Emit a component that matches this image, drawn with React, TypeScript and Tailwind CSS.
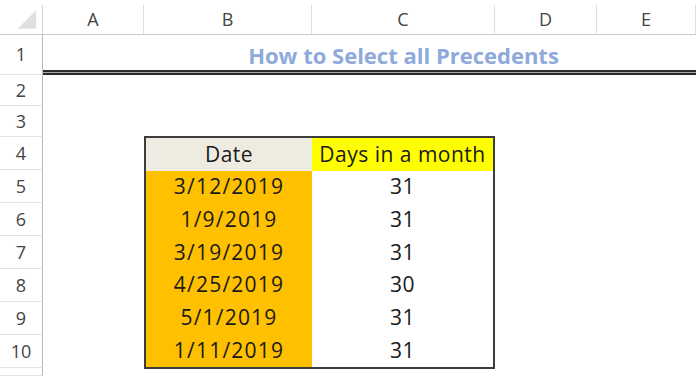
const columns = [
  { label: "A", width: "w-[101px]" },
  { label: "B", width: "w-[168px]" },
  { label: "C", width: "w-[183px]" },
  { label: "D", width: "w-[102px]" },
  { label: "E", width: "flex-1" },
];

const records = [
  { date: "3/12/2019", days: 31 },
  { date: "1/9/2019", days: 31 },
  { date: "3/19/2019", days: 31 },
  { date: "4/25/2019", days: 30 },
  { date: "5/1/2019", days: 31 },
  { date: "1/11/2019", days: 31 },
];

function RowHeader({ n, h }: { n?: number; h: string }) {
  return (
    <div className={`${h} w-[43px] shrink-0 border-r border-b border-r-[#b9b9b9] border-b-[#e2e2e2] flex items-center justify-center text-[18px] text-[#444]`}>
      {n}
    </div>
  );
}

export default function App() {
  return (
    <div className="w-[696px] h-[376px] overflow-hidden bg-white font-['Open_Sans',sans-serif] flex flex-col">
      {/* column letters */}
      <div className="h-[35px] shrink-0 flex border-b border-[#c8c8c8]">
        <div className="w-[43px] shrink-0 border-r border-[#d4d4d4] my-[5px] mb-0 flex items-end justify-end">
          <svg width="43" height="29" viewBox="0 5 43 29" className="block">
            <polygon points="18,29 37,10 37,29" fill="#dfdfdf" />
          </svg>
        </div>
        {columns.map((c) => (
          <div
            key={c.label}
            className={`${c.width} shrink-0 mt-[5px] border-r border-[#dedede] flex items-center justify-center text-[18px] text-[#444]`}
          >
            {c.label}
          </div>
        ))}
      </div>

      {/* row 1: title with double bottom border */}
      <div className="h-[40px] shrink-0 flex">
        <RowHeader n={1} h="h-[40px]" />
        <div className="flex-1 flex flex-col">
          <div className="h-[35px] shrink-0 flex pt-[4px]">
            <div className="w-[101px] shrink-0" />
            <div className="w-[168px] shrink-0" />
            <div className="w-[183px] shrink-0 flex items-center justify-center whitespace-nowrap leading-none text-[22px] font-bold text-[#8eaadb]">
              How to Select all Precedents
            </div>
          </div>
          <div className="h-[5px] shrink-0 border-y-2 border-[#2a2a2a] bg-[#a8a8a8]" />
        </div>
      </div>

      <div className="h-[31px] shrink-0 flex">
        <RowHeader n={2} h="h-[31px]" />
      </div>
      <div className="h-[31px] shrink-0 flex">
        <RowHeader n={3} h="h-[31px]" />
      </div>

      {/* rows 4-10 with the date table */}
      <div className="h-[231px] shrink-0 flex">
        <div className="flex flex-col">
          {[4, 5, 6, 7, 8, 9, 10].map((n) => (
            <RowHeader key={n} n={n} h="h-[33px]" />
          ))}
        </div>
        <div className="w-[101px] shrink-0" />
        <div className="w-[351px] shrink-0 -mt-px h-[233px] border-2 border-[#3c3c3c] flex flex-col text-[21px] text-[#1a1a1a] tracking-[0.5px]">
          <div className="flex-1 flex">
            <div className="w-[166px] shrink-0 bg-[#eeece1] flex items-center justify-center">Date</div>
            <div className="flex-1 bg-[#ffff00] flex items-center justify-center whitespace-nowrap">Days in a month</div>
          </div>
          {records.map((r) => (
            <div key={r.date} className="flex-1 flex">
              <div className="w-[166px] shrink-0 bg-[#ffc000] flex items-center justify-center tracking-[1.2px]">{r.date}</div>
              <div className="flex-1 bg-white flex items-center justify-center">{r.days}</div>
            </div>
          ))}
        </div>
      </div>

      <div className="flex-1 flex">
        <RowHeader h="h-full" />
      </div>
    </div>
  );
}
